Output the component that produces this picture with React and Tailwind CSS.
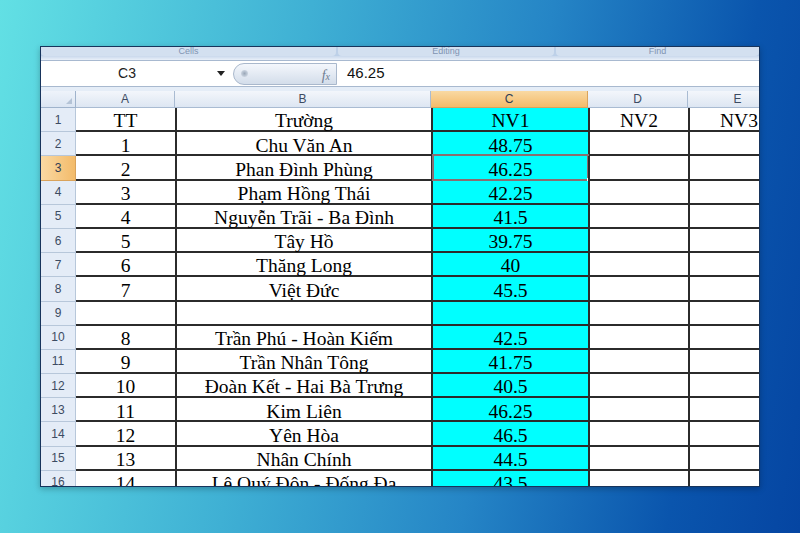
import React from "react";

const rows = [
  ["TT", "Trường", "NV1", "NV2", "NV3"],
  ["1", "Chu Văn An", "48.75"],
  ["2", "Phan Đình Phùng", "46.25"],
  ["3", "Phạm Hồng Thái", "42.25"],
  ["4", "Nguyễn Trãi - Ba Đình", "41.5"],
  ["5", "Tây Hồ", "39.75"],
  ["6", "Thăng Long", "40"],
  ["7", "Việt Đức", "45.5"],
  [],
  ["8", "Trần Phú - Hoàn Kiếm", "42.5"],
  ["9", "Trần Nhân Tông", "41.75"],
  ["10", "Đoàn Kết - Hai Bà Trưng", "40.5"],
  ["11", "Kim Liên", "46.25"],
  ["12", "Yên Hòa", "46.5"],
  ["13", "Nhân Chính", "44.5"],
  ["14", "Lê Quý Đôn - Đống Đa", "43.5"],
];

const cols = ["A", "B", "C", "D", "E"];

export default function App() {
  return (
    <div className="w-[800px] h-[533px] overflow-hidden bg-[linear-gradient(100deg,#62e0e4_0%,#3fb0d4_35%,#2585c6_62%,#0a55ad_85%,#0545a2_100%)] pt-[46px] pl-[40px]">
      <div className="w-[720px] h-[441px] overflow-hidden bg-[#dde7f3] border border-[#17345c] shadow-[0_2px_6px_rgba(0,0,0,0.25)] flex flex-col">
        {/* ribbon group labels */}
        <div className="shrink-0 h-[9px] flex gap-[2px] bg-[#bdd0e8] overflow-hidden">
          <div className="w-[295px] bg-[#d3e0f0] rounded-b-sm flex justify-center">
            <span className="text-[9px] leading-[9px] text-[#8194b2] font-['Liberation_Sans',sans-serif]">Cells</span>
          </div>
          <div className="w-[216px] bg-[#d3e0f0] rounded-b-sm flex justify-center">
            <span className="text-[9px] leading-[9px] text-[#8194b2] font-['Liberation_Sans',sans-serif]">Editing</span>
          </div>
          <div className="flex-1 bg-[#d3e0f0] rounded-b-sm flex justify-center">
            <span className="text-[9px] leading-[9px] text-[#8194b2] font-['Liberation_Sans',sans-serif]">Find</span>
          </div>
        </div>
        <div className="shrink-0 h-[5px] bg-[linear-gradient(#c9d8ec,#e9f0f9)] border-b border-[#a8b9d0]" />

        {/* formula bar */}
        <div className="shrink-0 h-[26px] flex items-center bg-white border-b border-[#a8b9cf] font-['Liberation_Sans',sans-serif]">
          <div className="w-[172px] text-center text-[14px] text-[#222]">C3</div>
          <div className="w-[16px] flex justify-center">
            <div className="w-0 h-0 border-l-[4px] border-r-[4px] border-t-[5px] border-l-transparent border-r-transparent border-t-[#222]" />
          </div>
          <div className="ml-[4px] w-[104px] h-[22px] rounded-l-full bg-[linear-gradient(#f4f7fc,#d3ddea)] border border-[#a9b8cc] flex items-center relative">
            <div className="ml-[7px] w-[7px] h-[7px] rounded-full bg-[radial-gradient(circle,#9aa7b8,#e0e7f1)]" />
            <span className="absolute right-[6px] top-[1px] font-['Liberation_Serif',serif] italic text-[14px] text-[#6e7c90]">
              f<span className="text-[10px]">x</span>
            </span>
          </div>
          <div className="pl-[10px] text-[15px] text-[#111]">46.25</div>
        </div>
        <div className="shrink-0 h-[4px] bg-[#e5edf7]" />

        {/* grid */}
        <div className="shrink-0 grid grid-cols-[35px_99px_256px_157px_100px_100px] w-[747px]">
          <div className="h-[17px] bg-[linear-gradient(#eef3fa,#dbe5f2)] border-r border-b border-[#9fb3cc] relative">
            <div className="absolute right-[3px] bottom-[3px] w-0 h-0 [border-bottom:6px_solid_#b4c3d6] [border-left:6px_solid_transparent]" />
          </div>
          {cols.map((c) => (
            <div
              key={c}
              className={
                c === "C"
                  ? "h-[17px] flex items-center justify-center text-[12px] text-[#2f3e55] font-['Liberation_Sans',sans-serif] bg-[linear-gradient(#f9d9a3,#f3bb6a)] border-r border-b border-[#d9a35c]"
                  : "h-[17px] flex items-center justify-center text-[12px] text-[#3c4b62] font-['Liberation_Sans',sans-serif] bg-[linear-gradient(#f3f6fb,#dde6f2)] border-r border-b border-[#a9bbd2]"
              }
            >
              {c}
            </div>
          ))}

          {rows.map((r, i) => (
            <React.Fragment key={i}>
              <div
                className={
                  i === 2
                    ? "h-[24.2px] flex items-center justify-center text-[12px] text-[#2f3e55] font-['Liberation_Sans',sans-serif] bg-[linear-gradient(90deg,#f9d9a3,#f3bb6a)] border-r border-b border-[#d9a35c]"
                    : "h-[24.2px] flex items-center justify-center text-[12px] text-[#3c4b62] font-['Liberation_Sans',sans-serif] bg-[#e4ecf7] border-r border-b border-[#b7c7da]"
                }
              >
                {i + 1}
              </div>
              {[0, 1, 2, 3, 4].map((j) => (
                <div
                  key={j}
                  className={
                    (j === 2 ? "bg-[#00ffff] " : "bg-white ") +
                    (j === 0 ? "border-l-0 " : "border-l-2 border-[#2b2b2b] ") +
                    "h-[24.2px] border-b-2 border-b-[#2b2b2b] relative flex items-center justify-center pt-[4px] font-['Liberation_Serif',serif] text-[19.5px] leading-none text-black whitespace-nowrap"
                  }
                >
                  {r[j] || ""}
                  {i === 2 && j === 2 && (
                    <>
                      <div className="absolute -left-[1px] -top-[2px] -right-[1px] -bottom-[2px] border-2 border-[#8a6e70]" />
                      <div className="absolute -right-[4px] -bottom-[4px] w-[5px] h-[5px] bg-[#222] border border-white" />
                    </>
                  )}
                </div>
              ))}
            </React.Fragment>
          ))}
        </div>
      </div>
    </div>
  );
}
